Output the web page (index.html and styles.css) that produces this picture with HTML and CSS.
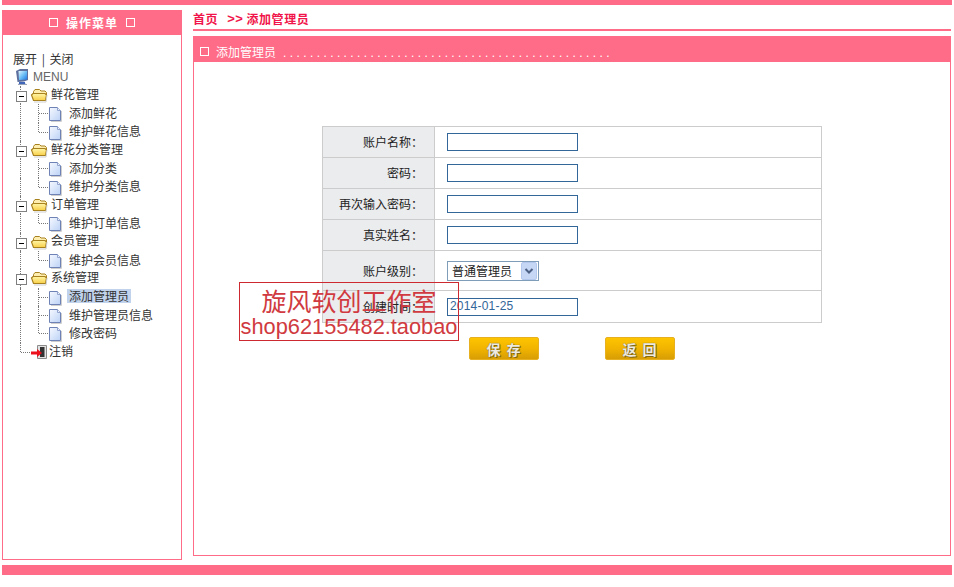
FILE: index.html
```html
<!DOCTYPE html>
<html lang="zh-CN">
<head>
<meta charset="utf-8">
<title>添加管理员</title>
<link rel="stylesheet" href="styles.css">
</head>
<body>
<svg class="defs" aria-hidden="true">
  <defs>
    <linearGradient id="gFolder" x1="0" y1="0" x2="0" y2="1"><stop offset="0" stop-color="#fff6a8"/><stop offset="1" stop-color="#f8cf48"/></linearGradient>
    <linearGradient id="gDoc" x1="0" y1="0" x2="1" y2="1"><stop offset="0" stop-color="#f6f9ff"/><stop offset="1" stop-color="#bcd2f6"/></linearGradient>
    <linearGradient id="gScreen" x1="0" y1="0" x2="1" y2="1"><stop offset="0" stop-color="#e2f6ff"/><stop offset=".5" stop-color="#6fc0f5"/><stop offset="1" stop-color="#1c78e6"/></linearGradient>
    <symbol id="folder" viewBox="0 0 18 18">
      <path d="M3.500 8V5.500L5 3.500h4.500L11 5h4l1.500 1.500V9" fill="#fdeeb0" stroke="#a8811f"/>
      <path d="M1.500 9 3 7.500h12l1.500 1.500-1 5.500H3.500z" fill="url(#gFolder)" stroke="#a8811f" stroke-width="1.200"/>
      <path d="M4 16h12l1-7" fill="none" stroke="#cfcfcf"/>
    </symbol>
    <symbol id="doc" viewBox="0 0 18 18">
      <path d="M1.500 3.500h8l3 3v10h-11z" fill="url(#gDoc)" stroke="#6e82b6"/>
      <path d="M9.500 3.500v3h3" fill="#eef3fc" stroke="#93a5cf"/>
      <path d="M13.500 7v10.500H3" fill="none" stroke="#cfcfcf"/>
    </symbol>
    <symbol id="monitor" viewBox="0 0 12 16">
      <path d="M0 2 4 0h8v11L8 12.500 1.500 13z" fill="#5d6f9c"/>
      <path d="M2.500 2h8.500v8.500L3 11z" fill="url(#gScreen)"/>
      <path d="M3 13h6v1.500l2 1H2l1-1z" fill="#3f66b8"/>
      <path d="M2 15h9v1H2z" fill="#9aa4b8"/>
    </symbol>
    <symbol id="logout" viewBox="0 0 16 14">
      <path d="M6.500.5h9v13h-9z" fill="#e2e2e2" stroke="#8c8c8c"/>
      <path d="M9 2h4.500v10L9 12z" fill="#333"/>
      <path d="M0 6.500h6V4l5 4-5 4V9.500H0z" fill="#ec0f1c"/>
    </symbol>
  </defs>
</svg>

<div class="bar"></div>
<div class="layout">
  <aside class="sidebar">
    <h2 class="side-head"><i class="sq"></i><span>操作菜单</span><i class="sq"></i></h2>
    <div class="toggle">展开 | 关闭</div>
    <div class="root"><svg class="ic-monitor"><use href="#monitor"/></svg><span>MENU</span></div>
    <ul class="tree">
      <li class="row"><i class="cell minus"></i><svg class="ic"><use href="#folder"/></svg><a class="t1">鲜花管理</a></li>
      <li class="row"><i class="cell line"></i><i class="cell join"></i><svg class="ic"><use href="#doc"/></svg><a class="t2">添加鲜花</a></li>
      <li class="row"><i class="cell line"></i><i class="cell end"></i><svg class="ic"><use href="#doc"/></svg><a class="t2">维护鲜花信息</a></li>
      <li class="row"><i class="cell minus"></i><svg class="ic"><use href="#folder"/></svg><a class="t1">鲜花分类管理</a></li>
      <li class="row"><i class="cell line"></i><i class="cell join"></i><svg class="ic"><use href="#doc"/></svg><a class="t2">添加分类</a></li>
      <li class="row"><i class="cell line"></i><i class="cell end"></i><svg class="ic"><use href="#doc"/></svg><a class="t2">维护分类信息</a></li>
      <li class="row"><i class="cell minus"></i><svg class="ic"><use href="#folder"/></svg><a class="t1">订单管理</a></li>
      <li class="row"><i class="cell line"></i><i class="cell end"></i><svg class="ic"><use href="#doc"/></svg><a class="t2">维护订单信息</a></li>
      <li class="row"><i class="cell minus"></i><svg class="ic"><use href="#folder"/></svg><a class="t1">会员管理</a></li>
      <li class="row"><i class="cell line"></i><i class="cell end"></i><svg class="ic"><use href="#doc"/></svg><a class="t2">维护会员信息</a></li>
      <li class="row"><i class="cell minus"></i><svg class="ic"><use href="#folder"/></svg><a class="t1">系统管理</a></li>
      <li class="row"><i class="cell line"></i><i class="cell join"></i><svg class="ic"><use href="#doc"/></svg><a class="t2 selected">添加管理员</a></li>
      <li class="row"><i class="cell line"></i><i class="cell join"></i><svg class="ic"><use href="#doc"/></svg><a class="t2">维护管理员信息</a></li>
      <li class="row"><i class="cell line"></i><i class="cell end"></i><svg class="ic"><use href="#doc"/></svg><a class="t2">修改密码</a></li>
      <li class="row"><i class="cell end"></i><svg class="ic-logout"><use href="#logout"/></svg><a class="t3">注销</a></li>
    </ul>
  </aside>

  <main class="main">
    <nav class="crumb"><span>首页</span><span class="sep">&gt;&gt;</span><span>添加管理员</span></nav>
    <section class="panel">
      <h3 class="panel-title"><i class="sq"></i><span>添加管理员</span><span class="dots">.................................................</span></h3>
      <form class="form">
        <table class="grid">
          <tr><th>账户名称：</th><td><input class="field" type="text"></td></tr>
          <tr><th>密码：</th><td><input class="field" type="password"></td></tr>
          <tr><th>再次输入密码：</th><td><input class="field" type="password"></td></tr>
          <tr><th>真实姓名：</th><td><input class="field" type="text"></td></tr>
          <tr class="tall"><th>账户级别：</th><td>
            <span class="select-wrap">
              <select class="select"><option>普通管理员</option></select>
              <svg class="select-btn" viewBox="0 0 16 18"><rect x=".5" y=".5" width="15" height="17" rx="1.500" fill="#c6d6f5" stroke="#b4c8ee"/><path d="M4.500 7 8 10.500 11.500 7" fill="none" stroke="#4d6185" stroke-width="2"/></svg>
            </span>
          </td></tr>
          <tr class="last"><th>创建时间：</th><td><input class="field date" type="text" value="2014-01-25"></td></tr>
        </table>
        <div class="actions">
          <button class="btn" type="button">保存</button>
          <button class="btn" type="button">返回</button>
        </div>
      </form>
    </section>
  </main>
</div>
<div class="bar foot"></div>

<div class="stamp">
  <div class="stamp-cn">旋风软创工作室</div>
  <div class="stamp-en">shop62155482.taobao</div>
</div>
</body>
</html>
```

FILE: styles.css
```css
* { box-sizing: border-box; }
html, body { margin: 0; padding: 0; }
body {
  position: relative;
  width: 954px;
  height: 587px;
  padding-left: 2px;
  overflow: hidden;
  background: #fff;
  color: #333;
  font: 12px/18px "Noto Sans CJK SC", "Liberation Sans", sans-serif;
}
.defs { position: absolute; width: 0; height: 0; }
.bar { width: 950px; height: 5px; background: #fe6c88; }
.foot { height: 10px; margin-top: 5px; }

.layout { display: flex; align-items: flex-start; gap: 11px; margin-top: 5px; }

.sq { display: block; width: 9px; height: 9px; border: 1px solid #fff; flex: none; }

/* sidebar */
.sidebar { width: 180px; height: 550px; border: 1px solid #fe6c88; border-top: 0; }
.side-head {
  display: flex; align-items: center; justify-content: center; gap: 8px;
  height: 25px; margin: 0 -1px; background: #fe6c88; color: #fff;
  font-size: 12px; font-weight: 700; letter-spacing: 1px;
}
.toggle { height: 18px; margin-top: 15px; padding-left: 10px; white-space: pre; word-spacing: 2px; }
.root { display: flex; align-items: center; height: 18px; padding-left: 13px; color: #666; font-family: "Liberation Sans", sans-serif; }
.ic-monitor { width: 12px; height: 16px; margin-right: 5px; }

.tree { list-style: none; margin: 0; padding: 0 0 0 9px; }
.row { display: flex; align-items: center; height: 18.33px; }
.row a { padding-bottom: 2px; line-height: 15px; white-space: nowrap; }
.cell { position: relative; display: block; flex: none; width: 18px; align-self: stretch; }
.line::before, .join::before, .end::before, .minus::before {
  content: ""; position: absolute; left: 8px; top: 0; bottom: 0;
  border-left: 1px dotted #777;
}
.end::before { bottom: 50%; }
.join::after, .end::after, .minus::after {
  content: ""; position: absolute; left: 9px; right: 0; top: 50%;
  border-top: 1px dotted #777;
}
.minus::after {
  left: 4px; top: 50%; width: 9px; height: 9px; margin-top: -4px;
  border: 1px solid #808080;
  background: linear-gradient(#000, #000) center / 5px 1px no-repeat #fff;
}
.ic { width: 18px; height: 18px; flex: none; }
.ic-logout { width: 16px; height: 14px; flex: none; margin-left: 1px; }
.row .t1 { margin-left: 3px; padding-bottom: 4px; }
.t2 { margin-left: 1px; padding: 0 2px 2px; }
.row .t2.selected { background: #c0d2ec; padding-bottom: 0; margin-bottom: 2px; margin-top: 1px; height: 14px; line-height: 14px; }
.t3 { margin-left: 2px; }

/* main */
.main { width: 758px; }
.crumb {
  display: flex; gap: 9px; height: 21px; border-bottom: 2px solid #fe6c88;
  color: #f0144a; font-weight: 700; font-size: 12px; letter-spacing: .6px; line-height: 18px;
}
.sep { font-family: "Liberation Sans", sans-serif; font-size: 13px; letter-spacing: .5px; margin-right: -6px; }
.panel { height: 520px; margin-top: 5px; border: 1px solid #fe6c88; border-top: 0; }
.panel-title {
  display: flex; align-items: center; height: 26px; margin: 0 0 0 -1px; padding: 5px 0 0 7px;
  background: #fe6c88; color: #fff; font-size: 12px; font-weight: 400;
}
.panel-title .sq { margin-right: 7px; }
.dots { margin-left: 7px; padding-top: 3px; font-family: "Liberation Sans", sans-serif; letter-spacing: 3.4px; }

/* form */
.form { padding-top: 64px; }
.grid { width: 500px; margin: 0 auto; border-collapse: collapse; table-layout: fixed; }
.grid th, .grid td { border: 1px solid #ccc; height: 31px; padding: 0; }
.grid th { width: 112px; padding-right: 11px; background: #ebecee; text-align: right; font-weight: 400; color: #222; }
.grid td { padding-left: 12px; }
.grid .tall th, .grid .tall td { height: 40px; }
.grid .last th, .grid .last td { height: 32px; }
.field {
  display: block; width: 131px; height: 18px; padding: 0 2px 1px; margin: 0;
  border: 1px solid #336699; border-radius: 0; background: #fff; outline: 0;
  font: 12px "Liberation Sans", sans-serif; color: #336699;
}
.date { letter-spacing: .2px; }
.select-wrap { position: relative; display: block; width: 92px; height: 20px; }
.select {
  appearance: none; display: block; width: 92px; height: 20px; padding: 0 0 0 4px; margin: 0;
  border: 1px solid #7f9db9; border-radius: 0; background: #fff; color: #222;
  font: 12px "Noto Sans CJK SC", sans-serif;
}
.select-btn { position: absolute; right: 2px; top: 1px; width: 16px; height: 18px; pointer-events: none; }

.actions { display: flex; justify-content: center; gap: 66px; margin-top: 14px; }
.btn {
  width: 70px; height: 23px; padding: 0 0 0 5px; margin: 0;
  border: 1px solid #e6b020; border-radius: 2px;
  background: linear-gradient(#fdc400 0, #f2b400 50%, #d79d05 100%);
  color: #eeeae0; font: 700 14px/20px "Noto Sans CJK SC", sans-serif; letter-spacing: 6px;
  text-shadow: 0 0 1px #5e5020, 1px 1px 0 #8a6d10;
}

/* overlay */
.stamp {
  position: absolute; left: 239px; top: 282px; width: 220px; height: 59px;
  border: 1px solid #cc2a30; color: #d03a40; text-align: center;
}
.stamp-cn { font-size: 25px; line-height: 34px; height: 33px; }
.stamp-en { font: 21.800px/22px "Liberation Sans", sans-serif; white-space: nowrap; }
```
